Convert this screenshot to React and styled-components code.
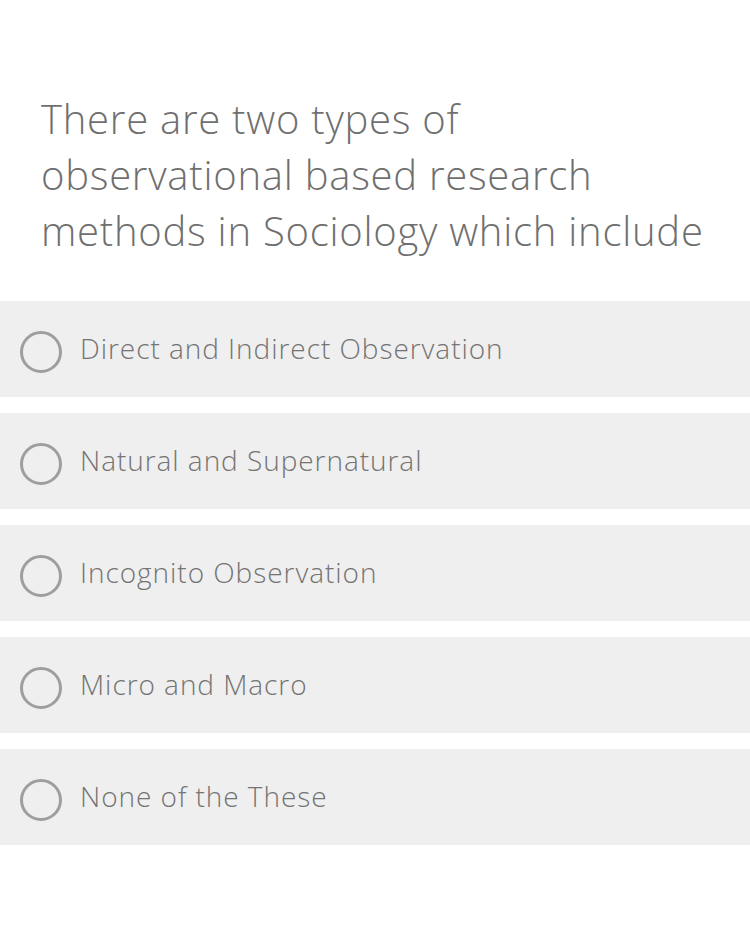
import React from "react";
import styled, { createGlobalStyle } from "styled-components";

const Global = createGlobalStyle`
  html, body { margin: 0; padding: 0; background: #ffffff; }
  body { font-family: "Open Sans", "Liberation Sans", sans-serif; }
`;

const Page = styled.div`
  width: 750px;
  min-height: 933px;
  background: #ffffff;
  padding-top: 91px;
  box-sizing: border-box;
`;

const Question = styled.h1`
  margin: 0 0 42px;
  padding: 0 30px 0 41px;
  font-size: 40px;
  font-weight: 300;
  line-height: 56px;
  color: #6f6f6f;
  letter-spacing: 0.75px;
`;

const Options = styled.div`
  display: flex;
  flex-direction: column;
  gap: 16px;
`;

const Option = styled.label`
  display: flex;
  align-items: center;
  height: 96px;
  background: #efefef;
  padding-left: 20px;
  gap: 18px;
  cursor: pointer;
`;

const Radio = styled.span`
  width: 36px;
  height: 36px;
  border: 3px solid #9e9e9e;
  border-radius: 50%;
  flex: none;
  margin-top: 6px;
`;

const Label = styled.span`
  font-size: 28px;
  font-weight: 300;
  color: #747474;
  letter-spacing: 0.95px;
  margin-top: -3px;
`;

const options = [
  "Direct and Indirect Observation",
  "Natural and Supernatural",
  "Incognito Observation",
  "Micro and Macro",
  "None of the These",
];

export default function App() {
  return (
    <Page>
      <Global />
      <Question>
        There are two types of observational based research methods in Sociology which include
      </Question>
      <Options>
        {options.map((o) => (
          <Option key={o}>
            <Radio />
            <Label>{o}</Label>
          </Option>
        ))}
      </Options>
    </Page>
  );
}
